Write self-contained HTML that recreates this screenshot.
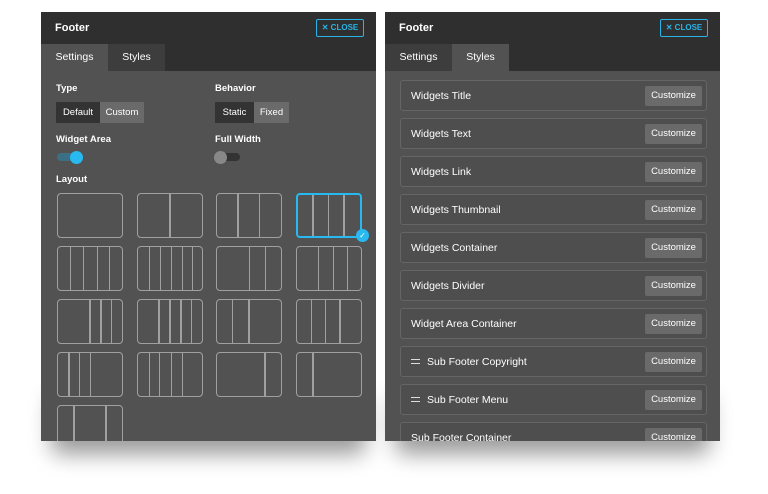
<!DOCTYPE html>
<html><head><style>
*{margin:0;padding:0;box-sizing:border-box}
body{width:768px;height:494px;background:#fff;font-family:"Liberation Sans",sans-serif;position:relative;overflow:hidden}
.panel{position:absolute;top:12px;width:335px;height:429px;background:#525252;overflow:hidden}
.shadow{position:absolute;top:380px;width:315px;height:58px;background:#555;box-shadow:0 16px 22px rgba(0,0,0,.4);border-radius:10px}
.hdr{position:absolute;left:0;top:0;right:0;height:59px;background:#2f2f2f}
.title{position:absolute;left:14px;top:10px;color:#fff;font-size:11px;font-weight:bold}
.close{position:absolute;right:12px;top:7px;width:48px;height:18px;border:1px solid #27b4e6;border-radius:2px;color:#27b4e6;font-size:8px;font-weight:bold;text-align:center;line-height:16px}
.tab{position:absolute;top:32px;height:27px;color:#fff;font-size:10.5px;line-height:27px;text-align:center}
.lbl{position:absolute;color:#fff;font-size:9.5px;font-weight:bold}
.seg{position:absolute;height:21px;font-size:9.5px;color:#fff;line-height:21px;text-align:center}
.box{position:absolute;width:66px;height:45px;border:1.3px solid #a0a0a0;border-radius:4px}
.box i{position:absolute;top:0;bottom:0;width:1.3px;background:#a0a0a0}
.row{position:absolute;left:15px;width:307px;height:31px;border:1px solid #656565;border-radius:3px;background:#4e4e4e;color:#fff;font-size:10.5px;line-height:30px;padding-left:10px}
.cust{position:absolute;right:4px;top:5px;width:57px;height:20px;background:#6a6a6a;border-radius:2px;font-size:9.5px;line-height:20px;text-align:center}
.ham{display:inline-block;width:9px;height:5px;border-top:1.2px solid #ddd;border-bottom:1.2px solid #ddd;margin-right:7px;vertical-align:1px}
</style></head><body>
<div class="shadow" style="left:51px"></div>
<div class="shadow" style="left:395px"></div>

<div class="panel" style="left:41px">
<div class="hdr"></div>
<div class="title">Footer</div>
<div class="close">✕ CLOSE</div>
<div class="tab" style="left:0;width:67px;background:#525252">Settings</div>
<div class="tab" style="left:67px;width:57px;background:#3d3d3d">Styles</div>
<div class="lbl" style="left:15px;top:71px">Type</div>
<div class="lbl" style="left:174px;top:71px">Behavior</div>
<div class="seg" style="left:15px;top:90px;width:44px;background:#333">Default</div>
<div class="seg" style="left:59px;top:90px;width:44px;background:#6a6a6a">Custom</div>
<div class="seg" style="left:174px;top:90px;width:39px;background:#333">Static</div>
<div class="seg" style="left:213px;top:90px;width:35px;background:#6a6a6a">Fixed</div>
<div class="lbl" style="left:15px;top:122px">Widget Area</div>
<div class="lbl" style="left:174px;top:122px">Full Width</div>
<div style="position:absolute;left:16px;top:141px;width:25px;height:8px;border-radius:4px;background:#3a6f86"></div>
<div style="position:absolute;left:29px;top:139px;width:13px;height:13px;border-radius:50%;background:#27b9f0"></div>
<div style="position:absolute;left:174px;top:141px;width:25px;height:8px;border-radius:4px;background:#333"></div>
<div style="position:absolute;left:173px;top:139px;width:13px;height:13px;border-radius:50%;background:#888"></div>
<div class="lbl" style="left:15px;top:162px">Layout</div>
</div>

<div class="panel" style="left:385px">
<div class="hdr"></div>
<div class="title">Footer</div>
<div class="close">✕ CLOSE</div>
<div class="tab" style="left:0;width:67px;background:#3d3d3d">Settings</div>
<div class="tab" style="left:67px;width:57px;background:#525252">Styles</div>
<div class="row" style="top:68px">Widgets Title<div class="cust">Customize</div></div>
<div class="row" style="top:106px">Widgets Text<div class="cust">Customize</div></div>
<div class="row" style="top:144px">Widgets Link<div class="cust">Customize</div></div>
<div class="row" style="top:182px">Widgets Thumbnail<div class="cust">Customize</div></div>
<div class="row" style="top:220px">Widgets Container<div class="cust">Customize</div></div>
<div class="row" style="top:258px">Widgets Divider<div class="cust">Customize</div></div>
<div class="row" style="top:296px">Widget Area Container<div class="cust">Customize</div></div>
<div class="row" style="top:334px"><span class="ham"></span>Sub Footer Copyright<div class="cust">Customize</div></div>
<div class="row" style="top:372px"><span class="ham"></span>Sub Footer Menu<div class="cust">Customize</div></div>
<div class="row" style="top:410px">Sub Footer Container<div class="cust">Customize</div></div>
</div>

<div style="position:absolute;left:41px;top:12px;width:335px;height:429px;overflow:hidden">
<div class="box" style="left:16px;top:181px"></div>
<div class="box" style="left:96px;top:181px"><i style="left:49%"></i></div>
<div class="box" style="left:175px;top:181px"><i style="left:32%"></i><i style="left:65%"></i></div>
<div class="box" style="left:255px;top:181px;border:2px solid #27b9f0"><i style="left:23%"></i><i style="left:48%"></i><i style="left:73%"></i></div>
<div style="position:absolute;left:315px;top:217px;width:13px;height:13px;border-radius:50%;background:#27b9f0;color:#fff;font-size:8px;line-height:13px;text-align:center">✓</div>

<div class="box" style="left:16px;top:234px"><i style="left:19%"></i><i style="left:39%"></i><i style="left:61%"></i><i style="left:80%"></i></div>
<div class="box" style="left:96px;top:234px"><i style="left:17%"></i><i style="left:34%"></i><i style="left:51%"></i><i style="left:68%"></i><i style="left:84%"></i></div>
<div class="box" style="left:175px;top:234px"><i style="left:50%"></i><i style="left:75%"></i></div>
<div class="box" style="left:255px;top:234px"><i style="left:33%"></i><i style="left:56%"></i><i style="left:78%"></i></div>

<div class="box" style="left:16px;top:287px"><i style="left:49%"></i><i style="left:66%"></i><i style="left:83%"></i></div>
<div class="box" style="left:96px;top:287px"><i style="left:32%"></i><i style="left:49%"></i><i style="left:66%"></i><i style="left:83%"></i></div>
<div class="box" style="left:175px;top:287px"><i style="left:23%"></i><i style="left:49%"></i></div>
<div class="box" style="left:255px;top:287px"><i style="left:22%"></i><i style="left:44%"></i><i style="left:66%"></i></div>

<div class="box" style="left:16px;top:340px"><i style="left:16%"></i><i style="left:33%"></i><i style="left:50%"></i></div>
<div class="box" style="left:96px;top:340px"><i style="left:17%"></i><i style="left:33%"></i><i style="left:51%"></i><i style="left:68%"></i></div>
<div class="box" style="left:175px;top:340px"><i style="left:74%"></i></div>
<div class="box" style="left:255px;top:340px"><i style="left:24%"></i></div>

<div class="box" style="left:16px;top:393px"><i style="left:24%"></i><i style="left:74%"></i></div>
</div>
</body></html>
